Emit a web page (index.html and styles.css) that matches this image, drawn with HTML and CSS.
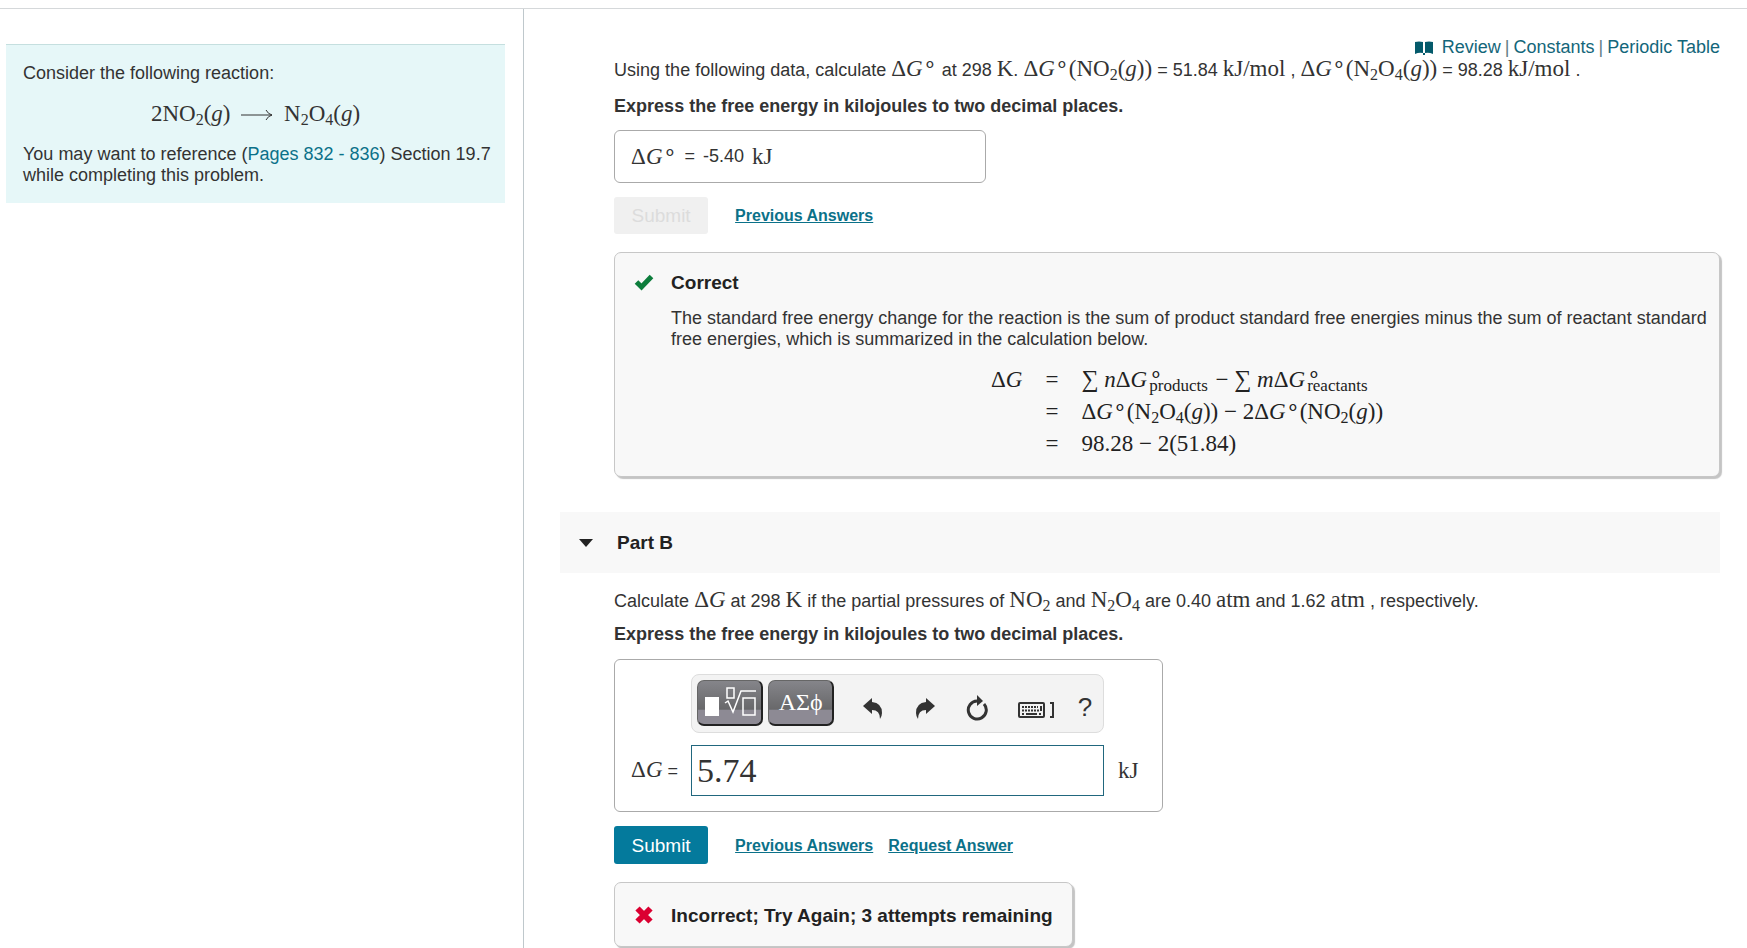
FILE: index.html
```
<!DOCTYPE html>
<html lang="en">
<head>
<meta charset="utf-8">
<title>Free energy problem</title>
<link rel="stylesheet" href="styles.css">
</head>
<body>
<div class="page">
  <aside class="intro">
    <div class="intro-card">
      <p>Consider the following reaction:</p>
      <p class="reaction math">2NO<sub>2</sub>(<i>g</i>)
        <svg class="arrow" viewBox="0 0 32 12" aria-label="yields"><path d="M0 6H31M25 1Q27 5 31 6Q27 7 25 11" fill="none" stroke="currentColor" stroke-width="1"/></svg>
        N<sub>2</sub>O<sub>4</sub>(<i>g</i>)</p>
      <p>You may want to reference (<a href="#">Pages 832 - 836</a>) Section 19.7 while completing this problem.</p>
    </div>
  </aside>
  <main class="work">
    <nav class="tools">
      <svg class="book" viewBox="0 0 18 14" aria-hidden="true"><path d="M0 1Q4 0 8 1V12Q4 11 0 13ZM10 1Q14 0 18 1V13Q14 11 10 12ZM8 12h2v2H8z" fill="currentColor"/></svg>
      <a href="#">Review</a><span class="bar">|</span><a href="#">Constants</a><span class="bar">|</span><a href="#">Periodic Table</a>
    </nav>
    <section class="part part-a">
      <p class="question">Using the following data, calculate <span class="math">Δ<i>G</i><sup>∘</sup></span> at 298 <span class="math">K</span>. <span class="math">Δ<i>G</i><sup>∘</sup>(NO<sub>2</sub>(<i>g</i>))</span> = 51.84 <span class="math">kJ/mol</span> , <span class="math">Δ<i>G</i><sup>∘</sup>(N<sub>2</sub>O<sub>4</sub>(<i>g</i>))</span> = 98.28 <span class="math">kJ/mol</span> .</p>
      <p class="instruction">Express the free energy in kilojoules to two decimal places.</p>
      <div class="answer"><span class="math">Δ<i>G</i><sup>∘</sup></span><span>=</span><span class="given">-5.40</span><span class="math">kJ</span></div>
      <div class="actions"><button class="submit" disabled>Submit</button><a href="#">Previous Answers</a></div>
      <div class="feedback">
        <svg class="mark good" viewBox="0 0 20 17" aria-hidden="true"><path d="M2.500 8.500L7.500 13.500L17.500 3" fill="none" stroke="currentColor" stroke-width="5"/></svg>
        <div class="feedback-body">
          <h3>Correct</h3>
          <p>The standard free energy change for the reaction is the sum of product standard free energies minus the sum of reactant standard free energies, which is summarized in the calculation below.</p>
          <div class="derivation math">
            <span>Δ<i>G</i></span><span class="eq">=</span><span><span class="sum">∑</span> <i>n</i>Δ<i>G</i><span class="stack"><span class="deg">∘</span><span>products</span></span> − <span class="sum">∑</span> <i>m</i>Δ<i>G</i><span class="stack"><span class="deg">∘</span><span>reactants</span></span></span>
            <span></span><span class="eq">=</span><span>Δ<i>G</i><sup>∘</sup>(N<sub>2</sub>O<sub>4</sub>(<i>g</i>)) − 2Δ<i>G</i><sup>∘</sup>(NO<sub>2</sub>(<i>g</i>))</span>
            <span></span><span class="eq">=</span><span>98.28 − 2(51.84)</span>
          </div>
        </div>
      </div>
    </section>
    <h2 class="part-head"><svg class="caret" viewBox="0 0 14 8" aria-hidden="true"><path d="M0 0H14L7 8Z" fill="currentColor"/></svg>Part B</h2>
    <section class="part">
      <p class="question">Calculate <span class="math">Δ<i>G</i></span> at 298 <span class="math">K</span> if the partial pressures of <span class="math">NO<sub>2</sub></span> and <span class="math">N<sub>2</sub>O<sub>4</sub></span> are 0.40 <span class="math">atm</span> and 1.62 <span class="math">atm</span> , respectively.</p>
      <p class="instruction">Express the free energy in kilojoules to two decimal places.</p>
      <div class="editor">
        <div class="toolbar">
          <button class="palette" aria-label="Templates"><svg class="root" viewBox="0 0 52 32"><rect x="1" y="11" width="14" height="19" fill="#fff"/><path d="M23 2h7v10h-7zM21 17l3-2 5 11 8-21h15M39 12h12v17h-12z" fill="none" stroke="#fff" stroke-width="1.500"/></svg></button>
          <button class="palette">ΑΣϕ</button>
          <div class="tool-row">
            <button class="tool" aria-label="Undo"><svg viewBox="0 0 20 22"><path d="M0 9L9 1V5Q19 6 19 16Q19 19 17 22Q17 13 9 13V17Z" fill="currentColor"/></svg></button>
            <button class="tool" aria-label="Redo"><svg viewBox="0 0 20 22"><path d="M20 9L11 1V5Q1 6 1 16Q1 19 3 22Q3 13 11 13V17Z" fill="currentColor"/></svg></button>
            <button class="tool" aria-label="Reset"><svg class="reset" viewBox="0 0 22 26"><path d="M11 6A9 9 0 1 0 18 9" fill="none" stroke="currentColor" stroke-width="3"/><path d="M11 0L17 6L11 11Z" fill="currentColor"/></svg></button>
            <button class="tool keys" aria-label="Keyboard shortcuts"><svg viewBox="0 0 36 18"><rect x="1" y="2" width="25" height="14" rx="1" fill="none" stroke="currentColor" stroke-width="2"/><path d="M4 6H20M4 9.500H22M4 13H6M21 13H23" stroke="currentColor" stroke-width="2" stroke-dasharray="2 1"/><path d="M8 13H19M23 5V10M32 2h3v14h-3" fill="none" stroke="currentColor" stroke-width="2"/></svg></button>
            <button class="tool help" aria-label="Help">?</button>
          </div>
        </div>
        <label class="lhs" for="dg"><span class="math">Δ<i>G</i></span> =</label>
        <input class="entry" id="dg" type="text" value="5.74">
        <span class="unit math">kJ</span>
      </div>
      <div class="actions"><button class="submit">Submit</button><a href="#">Previous Answers</a><a href="#">Request Answer</a></div>
      <div class="feedback compact">
        <svg class="mark bad" viewBox="0 0 20 20" aria-hidden="true"><path d="M3.500 3.500L16.500 16.500M16.500 3.500L3.500 16.500" stroke="currentColor" stroke-width="6"/></svg>
        <h3>Incorrect; Try Again; 3 attempts remaining</h3>
      </div>
    </section>
  </main>
</div>
</body>
</html>
```
FILE: styles.css
```
* { box-sizing: border-box; }
body {
  margin: 0;
  padding-top: 8px;
  background: #fff;
  color: #333;
  font-family: "Liberation Sans", Arial, sans-serif;
  font-size: 18px;
  line-height: 21px;
}
p, h2, h3 { margin: 0; }
a { color: #0b7189; text-decoration: none; }
button, input { font: inherit; }
.page {
  display: grid;
  grid-template-columns: 30% 1fr;
  min-height: calc(100vh - 8px);
  border-top: 1px solid #d5d8da;
}
.intro { padding: 35px 18px 0 6px; border-right: 1px solid #bfc8cc; }
.intro-card {
  display: flex;
  flex-direction: column;
  gap: 20px;
  padding: 18px 8px 17px 17px;
  background: #e6f7f8;
  border-top: 1px solid #c5dfdf;
}
.math {
  font-family: "Liberation Serif", "Times New Roman", serif;
  font-size: 23px;
}
.math sub, .math sup { font-size: 16px; line-height: 0; }
.math sub { vertical-align: -4px; }
.math sup { font-size: 22px; vertical-align: 5px; }
.reaction { padding-right: 9px; text-align: center; line-height: 20px; }
.arrow { width: 32px; height: 12px; margin: 0 5px; }
.work { padding: 28px 27px 0 36px; }
.tools {
  display: flex;
  align-items: center;
  justify-content: flex-end;
  gap: 4px;
  color: #5f7d86;
}
.tools a { color: #13667a; }
.book { width: 18px; height: 14px; margin-right: 5px; color: #045a6b; }
.part { padding-left: 54px; }
.question { margin-bottom: 12px; }
.part-a .question { margin-bottom: 15px; }
.instruction { font-weight: bold; margin-bottom: 14px; }
.part-a .instruction { margin-bottom: 13px; }
.answer {
  display: flex;
  align-items: center;
  gap: 8px;
  width: 372px;
  height: 53px;
  padding: 0 16px;
  border: 1px solid #aaa;
  border-radius: 6px;
}
.actions { display: flex; align-items: center; gap: 15px; margin: 14px 0 18px; }
.actions a { font-size: 16px; font-weight: bold; text-decoration: underline; }
.submit {
  width: 94px;
  height: 38px;
  padding: 0;
  margin-right: 12px;
  border: 0;
  border-radius: 3px;
  background: #047a9c;
  color: #fff;
  font-size: 19px;
}
.submit:disabled { height: 37px; background: #f0f0f0; color: #dcdcdc; }
.feedback {
  display: flex;
  gap: 17px;
  padding: 19px 8px 16px 19px;
  background: #f8f8f8;
  border: 1px solid #c7c7c7;
  border-radius: 7px;
  box-shadow: 2px 2px 1px #c4c4c4;
}
.feedback h3 { font-size: 19px; color: #222; }
.mark { flex: none; width: 20px; height: 20px; }
.good { color: #0d7d3c; }
.bad { color: #db0031; }
.feedback-body { flex: 1; }
.feedback-body p { margin: 15px 0 14px; }
.derivation {
  display: grid;
  grid-template-columns: auto auto auto;
  justify-content: center;
  column-gap: 23px;
  padding-right: 8px;
  line-height: 32px;
  color: #222;
}
.sum { font-size: 24px; line-height: 0; }
.stack {
  display: inline-flex;
  flex-direction: column;
  vertical-align: 6px;
  margin: 0 2px;
  font-size: 17px;
  line-height: 18px;
}
.deg { font-size: 22px; line-height: 6px; }
.part-head {
  display: flex;
  align-items: center;
  gap: 24px;
  margin: 35px 0 16px;
  padding: 20px 19px;
  background: #f8f8f8;
  color: #222;
  font-size: 19px;
}
.caret { width: 14px; height: 8px; }
.editor {
  display: grid;
  grid-template-columns: 60px 413px auto;
  justify-content: start;
  align-items: center;
  row-gap: 12px;
  column-gap: 0;
  width: 549px;
  padding: 14px 16px 15px;
  border: 1px solid #aaa;
  border-radius: 6px;
}
.toolbar {
  grid-column: 2;
  display: flex;
  align-items: center;
  gap: 5px;
  height: 59px;
  padding: 0 2px 2px 5px;
  background: #f3f3f3;
  border: 1px solid #ddd;
  border-radius: 8px;
}
.palette {
  display: flex;
  align-items: center;
  justify-content: center;
  width: 66px;
  height: 46px;
  padding: 0;
  border: 1px solid #666;
  border-bottom: 2px solid #222;
  border-right: 2px solid #222;
  border-radius: 7px;
  background: linear-gradient(#85858a, #68686a 66%, #8d8a94 67%);
  color: #fff;
  font-family: "Liberation Serif", serif;
  font-size: 24px;
}
.root { width: 52px; height: 32px; }
.tool-row { display: flex; align-items: center; padding: 10px 0 0 8px; }
.tool { display: flex; justify-content: center; width: 52px; padding: 0; border: 0; background: none; color: #333; }
.tool svg { width: 20px; height: 22px; }
.tool .reset { width: 22px; height: 26px; }
.tool.keys { width: 66px; padding-top: 5px; }
.keys svg { width: 36px; height: 18px; }
.tool.help { width: 32px; font-size: 26px; }
.lhs { grid-column: 1; white-space: nowrap; }
.entry {
  width: 100%;
  height: 51px;
  padding: 0 5px;
  border: 1px solid #21677e;
  color: #333;
  font-family: "Liberation Serif", serif;
  font-size: 34px;
}
.unit { padding-left: 14px; }
.compact { width: max-content; padding: 22px 19px 20px 19px; }
```
